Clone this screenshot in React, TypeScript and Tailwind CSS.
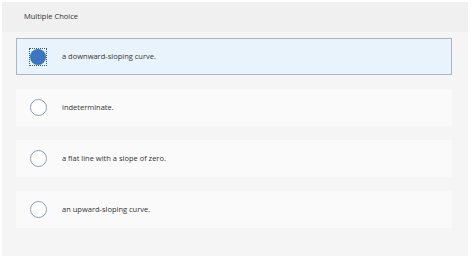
import React from 'react'

const options = [
  { id: 'a', label: 'a downward-sloping curve.', selected: true },
  { id: 'b', label: 'indeterminate.', selected: false },
  { id: 'c', label: 'a flat line with a slope of zero.', selected: false },
  { id: 'd', label: 'an upward-sloping curve.', selected: false },
]

function Radio({ selected }: { selected: boolean }) {
  if (selected) {
    return (
      <div className="w-[18px] h-[18px] border border-dotted border-[#3d5a80] flex items-center justify-center">
        <div className="w-[16px] h-[16px] rounded-full bg-[#3a77c0]" />
      </div>
    )
  }
  return <div className="w-[17px] h-[17px] rounded-full border border-[#8b9bb0] bg-white" />
}

export default function App() {
  return (
    <div className="w-[474px] h-[260px] bg-white pt-[2px] pl-[2px] pr-[6px] pb-[4px]" style={{ fontFamily: '"Open Sans", sans-serif' }}>
      <div className="h-full bg-[#f5f5f5] flex flex-col">
        {/* Header */}
        <div className="h-[30px] bg-[#f0f0f0] px-[22px] flex items-center text-[7.5px] text-[#333]">
          Multiple Choice
        </div>

        {/* Options */}
        <div className="flex flex-col gap-[14px] pl-[14px] pr-[16px] pt-[6px]">
          {options.map((opt) => (
            <div
              key={opt.id}
              className={
                opt.selected
                  ? 'h-[37px] flex items-center pl-[12px] border border-[#a8b6c6] bg-[#e9f3fc]'
                  : 'h-[37px] flex items-center pl-[13px] bg-[#fafafa]'
              }
            >
              <div className="w-[18px] flex justify-center">
                <Radio selected={opt.selected} />
              </div>
              <span className="ml-[15px] text-[7.5px] text-[#333]">{opt.label}</span>
            </div>
          ))}
        </div>
      </div>
    </div>
  )
}
